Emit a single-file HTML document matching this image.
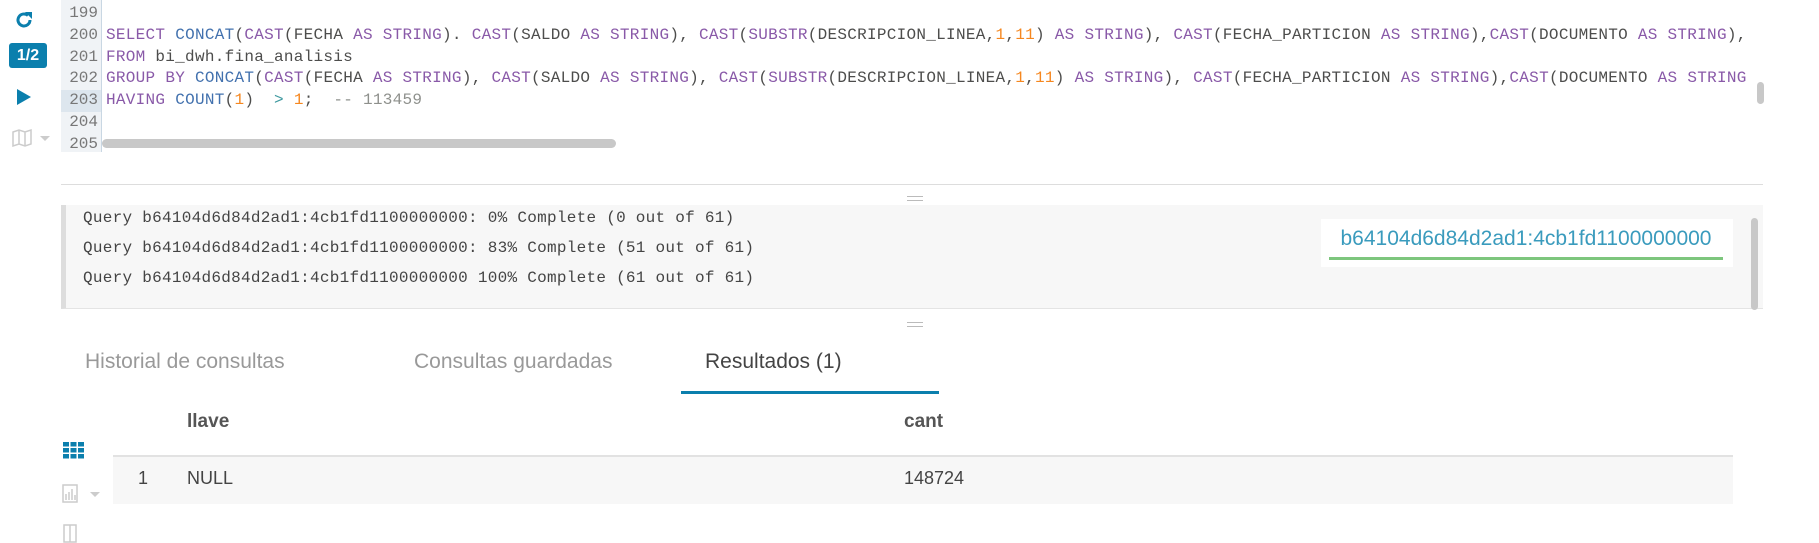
<!DOCTYPE html>
<html><head><meta charset="utf-8"><style>
*{margin:0;padding:0;box-sizing:border-box}
body{width:1819px;height:543px;background:#fff;position:relative;overflow:hidden;font-family:"Liberation Sans",sans-serif}
.abs{position:absolute}
.code{position:absolute;left:106px;font-family:"Liberation Mono",monospace;font-size:16px;letter-spacing:0.28px;color:#4d4d4c;white-space:pre;line-height:21.8px}
.ln{position:absolute;left:61px;width:40px;font-family:"Liberation Mono",monospace;font-size:16px;color:#777;text-align:right;padding-right:3px;line-height:21.8px;white-space:pre}
.k{color:#8959a8}.f{color:#4271ae}.n{color:#f5871f}.o{color:#3e999f}.c{color:#8e908c}
.log{font-family:"Liberation Mono",monospace;font-size:16px;color:#444;position:absolute;left:83px;white-space:pre;letter-spacing:0.27px}
.tab{position:absolute;top:350px;font-size:21px;color:#999}
</style></head><body>
<!-- left toolbar -->
<svg class="abs" style="left:14px;top:10px" width="20" height="20" viewBox="0 0 20 20"><path d="M16 10a6 6 0 1 1-2-4.5" fill="none" stroke="#0b7fad" stroke-width="3"/><path d="M11 2h7v7z" fill="#0b7fad"/></svg>
<div class="abs" style="left:9px;top:43px;width:38px;height:25px;background:#0b7fad;border-radius:3px;color:#fff;font-weight:bold;font-size:16px;text-align:center;line-height:25px">1/2</div>
<svg class="abs" style="left:16px;top:88px" width="16" height="18"><path d="M1 1L15 9L1 17Z" fill="#0b7fad"/></svg>
<svg class="abs" style="left:11px;top:128px" width="45" height="20"><path d="M2 4l6-2 6 2 6-2v14l-6 2-6-2-6 2z M8 2v14 M14 4v14" fill="none" stroke="#ccc" stroke-width="1.5"/><path d="M29 8h10l-5 5z" fill="#ccc"/></svg>
<!-- gutter -->
<div class="abs" style="left:61px;top:0;width:40px;height:152px;background:#f0f3f6"></div>
<div class="abs" style="left:61px;top:90px;width:40px;height:22px;background:#dde6ee"></div>
<div class="abs" style="left:101px;top:0;width:1px;height:152px;background:#c9d7e3"></div>
<div class="ln" style="top:3px">199
200
201
202
203
204
205</div>
<div class="code" style="top:3px">
<span class="k">SELECT</span> <span class="f">CONCAT</span>(<span class="k">CAST</span>(FECHA <span class="k">AS</span> <span class="k">STRING</span>). <span class="k">CAST</span>(SALDO <span class="k">AS</span> <span class="k">STRING</span>), <span class="k">CAST</span>(<span class="k">SUBSTR</span>(DESCRIPCION_LINEA,<span class="n">1</span>,<span class="n">11</span>) <span class="k">AS</span> <span class="k">STRING</span>), <span class="k">CAST</span>(FECHA_PARTICION <span class="k">AS</span> <span class="k">STRING</span>),<span class="k">CAST</span>(DOCUMENTO <span class="k">AS</span> <span class="k">STRING</span>),
<span class="k">FROM</span> bi_dwh.fina_analisis
<span class="k">GROUP</span> <span class="k">BY</span> <span class="f">CONCAT</span>(<span class="k">CAST</span>(FECHA <span class="k">AS</span> <span class="k">STRING</span>), <span class="k">CAST</span>(SALDO <span class="k">AS</span> <span class="k">STRING</span>), <span class="k">CAST</span>(<span class="k">SUBSTR</span>(DESCRIPCION_LINEA,<span class="n">1</span>,<span class="n">11</span>) <span class="k">AS</span> <span class="k">STRING</span>), <span class="k">CAST</span>(FECHA_PARTICION <span class="k">AS</span> <span class="k">STRING</span>),<span class="k">CAST</span>(DOCUMENTO <span class="k">AS</span> <span class="k">STRING</span>
<span class="k">HAVING</span> <span class="f">COUNT</span>(<span class="n">1</span>)  <span class="o">&gt;</span> <span class="n">1</span>;  <span class="c">-- 113459</span>
</div>
<div class="abs" style="left:1756px;top:0;width:63px;height:152px;background:#fff"></div>
<div class="abs" style="left:1757px;top:82px;width:7px;height:22px;background:#c8c8c8;border-radius:4px"></div>
<div class="abs" style="left:102px;top:139px;width:514px;height:9px;background:#c8c8c8;border-radius:5px"></div>
<div class="abs" style="left:102px;top:149px;width:1654px;height:5px;background:#fff"></div>
<!-- separator -->
<div class="abs" style="left:61px;top:184px;width:1702px;height:1px;background:#ddd"></div>
<div class="abs" style="left:907px;top:196px;width:16px;height:5px;border-top:1px solid #bbb;border-bottom:1px solid #bbb"></div>
<!-- log -->
<div class="abs" style="left:61px;top:205px;width:1702px;height:104px;background:#f7f7f7;border-left:5px solid #ddd;border-bottom:1px solid #e4e4e4"></div>
<div class="log" style="top:209px">Query b64104d6d84d2ad1:4cb1fd1100000000: 0% Complete (0 out of 61)</div>
<div class="log" style="top:239px">Query b64104d6d84d2ad1:4cb1fd1100000000: 83% Complete (51 out of 61)</div>
<div class="log" style="top:269px">Query b64104d6d84d2ad1:4cb1fd1100000000 100% Complete (61 out of 61)</div>
<div class="abs" style="left:1321px;top:219px;width:412px;height:48px;background:#fff"></div>
<div class="abs" style="left:1329px;top:227px;width:394px;text-align:center;color:#3a9bbd;font-size:21px">b64104d6d84d2ad1:4cb1fd1100000000</div>
<div class="abs" style="left:1329px;top:257px;width:394px;height:3px;background:#7dc67d"></div>
<div class="abs" style="left:1751px;top:218px;width:7px;height:92px;background:#c8c8c8;border-radius:4px"></div>
<div class="abs" style="left:907px;top:322px;width:16px;height:5px;border-top:1px solid #bbb;border-bottom:1px solid #bbb"></div>
<!-- tabs -->
<div class="tab" style="left:85px">Historial de consultas</div>
<div class="tab" style="left:414px">Consultas guardadas</div>
<div class="tab" style="left:705px;color:#444">Resultados (1)</div>
<div class="abs" style="left:681px;top:391px;width:258px;height:3px;background:#0b7fad"></div>
<!-- table -->
<div class="abs" style="left:187px;top:411px;font-size:19px;font-weight:bold;color:#555">llave</div>
<div class="abs" style="left:904px;top:411px;font-size:19px;font-weight:bold;color:#555">cant</div>
<div class="abs" style="left:113px;top:455px;width:1620px;height:49px;background:#f7f7f7;border-top:2px solid #e2e2e2"></div>
<div class="abs" style="left:138px;top:468px;font-size:18px;color:#444">1</div>
<div class="abs" style="left:187px;top:468px;font-size:18px;color:#444">NULL</div>
<div class="abs" style="left:904px;top:468px;font-size:18px;color:#444">148724</div>
<!-- result icons -->
<svg class="abs" style="left:63px;top:442px" width="21" height="17"><g fill="#0b7fad"><rect x="0" y="0" width="6" height="4.5"/><rect x="7.5" y="0" width="6" height="4.5"/><rect x="15" y="0" width="6" height="4.5"/><rect x="0" y="6" width="6" height="4.5"/><rect x="7.5" y="6" width="6" height="4.5"/><rect x="15" y="6" width="6" height="4.5"/><rect x="0" y="12" width="6" height="4.5"/><rect x="7.5" y="12" width="6" height="4.5"/><rect x="15" y="12" width="6" height="4.5"/></g></svg>
<svg class="abs" style="left:62px;top:484px" width="44" height="20"><rect x="1" y="1" width="14" height="17" fill="none" stroke="#ccc" stroke-width="1.5"/><path d="M4 16v-6M7 16v-8M10 16v-11M13 16v-5" stroke="#ccc" stroke-width="1.5"/><path d="M28 8h10l-5 5z" fill="#ccc"/></svg>
<svg class="abs" style="left:63px;top:524px" width="14" height="19"><rect x="1" y="1" width="12" height="17" fill="none" stroke="#ccc" stroke-width="1.5"/><path d="M7 1v17" stroke="#ccc" stroke-width="1.5"/></svg>
</body></html>
